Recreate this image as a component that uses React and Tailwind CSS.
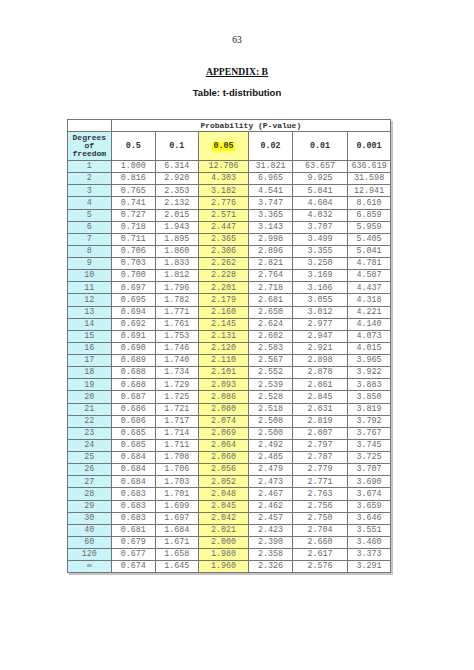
const rows = [
  ["1", "1.000", "6.314", "12.706", "31.821", "63.657", "636.619"],
  ["2", "0.816", "2.920", "4.303", "6.965", "9.925", "31.598"],
  ["3", "0.765", "2.353", "3.182", "4.541", "5.841", "12.941"],
  ["4", "0.741", "2.132", "2.776", "3.747", "4.604", "8.610"],
  ["5", "0.727", "2.015", "2.571", "3.365", "4.032", "6.859"],
  ["6", "0.718", "1.943", "2.447", "3.143", "3.707", "5.959"],
  ["7", "0.711", "1.895", "2.365", "2.998", "3.499", "5.405"],
  ["8", "0.706", "1.860", "2.306", "2.896", "3.355", "5.041"],
  ["9", "0.703", "1.833", "2.262", "2.821", "3.250", "4.781"],
  ["10", "0.700", "1.812", "2.228", "2.764", "3.169", "4.587"],
  ["11", "0.697", "1.796", "2.201", "2.718", "3.106", "4.437"],
  ["12", "0.695", "1.782", "2.179", "2.681", "3.055", "4.318"],
  ["13", "0.694", "1.771", "2.160", "2.650", "3.012", "4.221"],
  ["14", "0.692", "1.761", "2.145", "2.624", "2.977", "4.140"],
  ["15", "0.691", "1.753", "2.131", "2.602", "2.947", "4.073"],
  ["16", "0.690", "1.746", "2.120", "2.583", "2.921", "4.015"],
  ["17", "0.689", "1.740", "2.110", "2.567", "2.898", "3.965"],
  ["18", "0.688", "1.734", "2.101", "2.552", "2.878", "3.922"],
  ["19", "0.688", "1.729", "2.093", "2.539", "2.861", "3.883"],
  ["20", "0.687", "1.725", "2.086", "2.528", "2.845", "3.850"],
  ["21", "0.686", "1.721", "2.080", "2.518", "2.831", "3.819"],
  ["22", "0.686", "1.717", "2.074", "2.508", "2.819", "3.792"],
  ["23", "0.685", "1.714", "2.069", "2.500", "2.807", "3.767"],
  ["24", "0.685", "1.711", "2.064", "2.492", "2.797", "3.745"],
  ["25", "0.684", "1.708", "2.060", "2.485", "2.787", "3.725"],
  ["26", "0.684", "1.706", "2.056", "2.479", "2.779", "3.707"],
  ["27", "0.684", "1.703", "2.052", "2.473", "2.771", "3.690"],
  ["28", "0.683", "1.701", "2.048", "2.467", "2.763", "3.674"],
  ["29", "0.683", "1.699", "2.045", "2.462", "2.756", "3.659"],
  ["30", "0.683", "1.697", "2.042", "2.457", "2.750", "3.646"],
  ["40", "0.681", "1.684", "2.021", "2.423", "2.704", "3.551"],
  ["60", "0.679", "1.671", "2.000", "2.390", "2.660", "3.460"],
  ["120", "0.677", "1.658", "1.980", "2.358", "2.617", "3.373"],
  ["∞", "0.674", "1.645", "1.960", "2.326", "2.576", "3.291"],
];

const probs = ["0.5", "0.1", "0.05", "0.02", "0.01", "0.001"];

const cellBg = (i) => {
  if (i === 0) return "bg-[#c9f5fa]";
  if (i === 3) return "bg-[#ffff99]";
  return "bg-white";
};

export default function App() {
  return (
    <div className="min-h-[670px] w-[474px] bg-white">
      {/* page heading */}
      <div className="pt-[35px] text-center font-['Liberation_Serif',serif] text-[9.5px] leading-[11px] text-[#222]">
        63
      </div>
      <div className="mt-[20px] text-center font-['Liberation_Serif',serif] text-[9.7px] font-bold leading-[12px] text-[#111] underline">
        APPENDIX: B
      </div>
      <div className="mt-[9px] text-center font-['Liberation_Sans',sans-serif] text-[9.5px] font-bold leading-[12px] text-[#111]">
        Table: t-distribution
      </div>

      {/* table */}
      <div className="ml-[67px] mt-[20px] w-[324px] shadow-[2px_2px_0_#c4c4c4]">
        <div className="grid grid-cols-[42.7px_43.3px_41.7px_49.6px_42.4px_54.6px_41.7px] grid-rows-[11px_28px_repeat(34,11.13px)] gap-px bg-[#757575] p-px font-['Liberation_Mono',monospace]">
          <div className="bg-white" />
          <div className="col-span-6 flex items-center justify-center bg-white text-[8px] font-bold text-[#333]">
            Probability (P-value)
          </div>

          <div className="flex flex-col items-center justify-center bg-[#c9f5fa] text-[8px] font-bold leading-[8.3px] text-[#333]">
            <span>Degrees</span>
            <span>of</span>
            <span>freedom</span>
          </div>
          {probs.map((p, i) => (
            <div
              key={p}
              className={`flex items-center justify-center text-[8.4px] font-bold text-[#333] ${cellBg(i + 1)}`}
            >
              {i === 2 ? <span className="bg-[#ffff00] px-[1px] leading-[9px]">{p}</span> : p}
            </div>
          ))}

          {rows.map((r) =>
            r.map((v, i) => (
              <div
                key={r[0] + "-" + i}
                className={`flex items-center justify-center text-[8.4px] leading-none text-[#6c6c6c] ${cellBg(i)}`}
              >
                {v}
              </div>
            ))
          )}
        </div>
      </div>
    </div>
  );
}
